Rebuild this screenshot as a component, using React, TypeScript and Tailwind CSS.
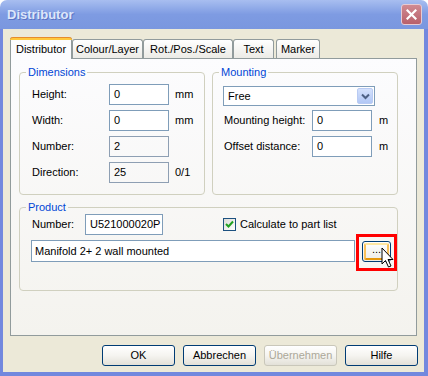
import React from "react";

const font = { fontFamily: '"Liberation Sans", Arial, sans-serif' };

function Field({ value, w, disabled }: { value: string; w: string; disabled?: boolean }) {
  return (
    <div
      className={`${w} h-[21px] border flex items-center px-[4px] text-[11px] text-black ${
        disabled ? "border-[#8E9FB3] bg-transparent" : "border-[#7F9DB9] bg-white"
      }`}
    >
      {value}
    </div>
  );
}

function Btn({ label, disabled }: { label: string; disabled?: boolean }) {
  return (
    <div
      className={`w-[73px] h-[21px] rounded-[3px] border flex items-center justify-center text-[11px] bg-gradient-to-b from-[#FFFFFF] via-[#F5F4F0] to-[#E3E1D8] ${
        disabled ? "border-[#C9C7BA] text-[#ACA899]" : "border-[#003C74] text-black"
      }`}
    >
      {label}
    </div>
  );
}

function Tab({ label, w }: { label: string; w: string }) {
  return (
    <div
      className={`${w} h-[19px] rounded-t-[3px] border border-b-0 border-[#919B9C] bg-gradient-to-b from-[#FFFFFF] to-[#ECEBE6] flex items-center justify-center text-[11px] text-black`}
    >
      {label}
    </div>
  );
}

export default function App() {
  return (
    <div className="w-[428px] h-[376px] flex flex-col select-none" style={font}>
      {/* Title bar */}
      <div className="h-[29px] flex items-center justify-between rounded-t-[7px] bg-gradient-to-b from-[#A8BEF0] via-[#7E9BE2] to-[#7A97DF] pl-[7px] pr-[6px]">
        <span className="text-[13px] font-bold text-[#DCE6FA] [text-shadow:1px_1px_0_#5A72C4]">Distributor</span>
        <div className="w-[21px] h-[21px] rounded-[3px] border border-[#E6CBD3] bg-gradient-to-b from-[#D08A92] to-[#B8606A] flex items-center justify-center">
          <svg width="11" height="11" viewBox="0 0 11 11">
            <path d="M1.5 1.5 L9.5 9.5 M9.5 1.5 L1.5 9.5" stroke="#FFFFFF" strokeWidth="2.2" strokeLinecap="square" />
          </svg>
        </div>
      </div>

      {/* Body */}
      <div className="flex-1 flex flex-col bg-[#ECE9D8] border-l-[3px] border-r-[4px] border-b-[4px] border-[#7288DE] pt-[7px] px-[7px]">
        {/* Tabs */}
        <div className="flex items-end h-[22px]">
          <div className="relative z-10 w-[62px] h-[22px] -mb-[1px] rounded-t-[3px] border-x border-[#919B9C] bg-[#FCFCFE] flex flex-col">
            <div className="h-[3px] -mx-[1px] rounded-t-[3px] bg-[#FFC83C] border-t border-[#E68B2C]" />
            <div className="flex-1 flex items-center justify-center text-[11px] text-black -mt-[1px]">Distributor</div>
          </div>
          <Tab label="Colour/Layer" w="w-[71px]" />
          <Tab label="Rot./Pos./Scale" w="w-[90px]" />
          <Tab label="Text" w="w-[41px]" />
          <div className="w-[2px]" />
          <Tab label="Marker" w="w-[44px]" />
        </div>

        {/* Panel */}
        <div className="h-[278px] border border-[#919B9C] bg-gradient-to-b from-[#FCFCFE] to-[#F4F3EE] pl-[8px] pt-[6px] flex flex-col">
          <div className="flex gap-[7px]">
            {/* Dimensions */}
            <fieldset className="w-[186px] h-[130px] border border-[#D0D0BF] rounded-[4px] p-0">
              <legend className="ml-[6px] px-[2px] text-[11px] text-[#0046D5] leading-[14px]">Dimensions</legend>
              <div className="flex flex-col gap-[5px] pt-[5px] pl-[12px] text-[11px] text-black">
                {[
                  ["Height:", "0", "mm", false],
                  ["Width:", "0", "mm", false],
                  ["Number:", "2", "", true],
                  ["Direction:", "25", "0/1", true],
                ].map(([l, v, u, d]) => (
                  <div key={l as string} className="flex items-center">
                    <span className="w-[77px]">{l}</span>
                    <Field value={v as string} w="w-[60px]" disabled={d as boolean} />
                    <span className="ml-[6px]">{u}</span>
                  </div>
                ))}
              </div>
            </fieldset>

            {/* Mounting */}
            <fieldset className="w-[186px] h-[130px] border border-[#D0D0BF] rounded-[4px] p-0">
              <legend className="ml-[6px] px-[2px] text-[11px] text-[#0046D5] leading-[14px]">Mounting</legend>
              <div className="pt-[7px] pl-[10px] text-[11px] text-black">
                <div className="w-[152px] h-[20px] border border-[#7F9DB9] bg-white flex items-center justify-between pl-[4px] pr-[1px]">
                  <span>Free</span>
                  <div className="w-[16px] h-[16px] rounded-[2px] border border-[#B9CBF3] bg-gradient-to-b from-[#D4E1FC] to-[#B1C7F5] flex items-center justify-center">
                    <svg width="9" height="7" viewBox="0 0 9 7">
                      <path d="M1 1.5 L4.5 5 L8 1.5" stroke="#4D6185" strokeWidth="2" fill="none" />
                    </svg>
                  </div>
                </div>
                <div className="flex flex-col gap-[5px] mt-[4px]">
                  {[
                    ["Mounting height:", "0"],
                    ["Offset distance:", "0"],
                  ].map(([l, v]) => (
                    <div key={l} className="flex items-center">
                      <span className="w-[89px] pl-[1px]">{l}</span>
                      <Field value={v} w="w-[60px]" />
                      <span className="ml-[7px]">m</span>
                    </div>
                  ))}
                </div>
              </div>
            </fieldset>
          </div>

          {/* Product */}
          <fieldset className="mt-[5px] w-[379px] h-[91px] border border-[#D0D0BF] rounded-[4px] p-0">
            <legend className="ml-[6px] px-[2px] text-[11px] text-[#0046D5] leading-[14px]">Product</legend>
            <div className="pl-[12px] text-[11px] text-black">
              <div className="flex items-center">
                <span className="w-[53px]">Number:</span>
                <Field value="U521000020P" w="w-[78px]" />
                <div className="ml-[60px] w-[13px] h-[13px] border border-[#1C5180] bg-gradient-to-br from-[#DCDCD7] to-[#FFFFFF] flex items-center justify-center">
                  <svg width="9" height="9" viewBox="0 0 9 9">
                    <path d="M1 4 L3.5 6.5 L8 1.5" stroke="#21A121" strokeWidth="2" fill="none" />
                  </svg>
                </div>
                <span className="ml-[4px]">Calculate to part list</span>
              </div>
              <div className="flex items-center mt-[5px] -ml-[1px]">
                <div className="w-[324px] h-[22px] border border-[#7F9DB9] bg-white flex items-center px-[3px]">
                  Manifold 2+ 2 wall mounted
                </div>
                <div className="relative ml-[7px]">
                  <div className="w-[29px] h-[21px] rounded-[3px] border border-[#003C74] bg-gradient-to-b from-[#FFFFFF] to-[#ECEBE6] p-[1px]">
                    <div className="w-full h-full rounded-[2px] border-2 border-t-[#FFE7A2] border-x-[#F9C15B] border-b-[#E5970B] flex items-center justify-center text-[11px] leading-none pb-[3px]">
                      ...
                    </div>
                  </div>
                  <div className="absolute -left-[6px] -top-[7px] w-[41px] h-[37px] border-[3px] border-[#FF0000]" />
                  <svg className="absolute left-[19px] top-[6px]" width="14" height="22" viewBox="0 0 14 22">
                    <path d="M1 1 L1 17 L4.5 13.5 L7.5 20 L10 19 L7 12.5 L12 12.5 Z" fill="#FFFFFF" stroke="#000000" strokeWidth="1" strokeLinejoin="miter" />
                  </svg>
                </div>
              </div>
            </div>
          </fieldset>
        </div>

        {/* Buttons */}
        <div className="flex justify-end gap-[8px] mt-[9px] -mr-[1px]">
          <Btn label="OK" />
          <Btn label="Abbrechen" />
          <Btn label="Übernehmen" disabled />
          <Btn label="Hilfe" />
        </div>
      </div>
    </div>
  );
}
